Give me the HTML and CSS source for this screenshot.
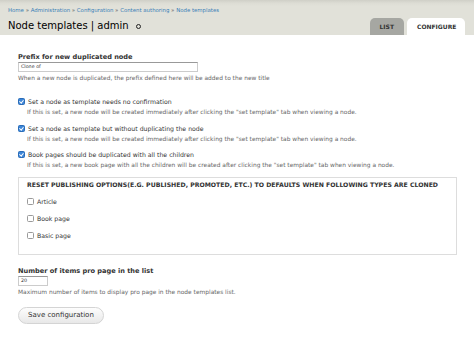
FILE: index.html
```html
<!DOCTYPE html>
<html>
<head>
<meta charset="utf-8">
<link rel="stylesheet" href="styles.css">
</head>
<body>
<div class="header">
  <div class="head-left">
    <div class="breadcrumb"><a>Home</a> » <a>Administration</a> » <a>Configuration</a> » <a>Content authoring</a> » <a>Node templates</a></div>
    <h1 class="title">Node templates | admin <span class="shortcut"></span></h1>
  </div>
  <ul class="tabs">
    <li class="tab">LIST</li>
    <li class="tab active">CONFIGURE</li>
  </ul>
</div>
<div class="content">
  <div class="item">
    <label class="label">Prefix for new duplicated node</label>
    <div class="input wide">Clone of</div>
    <div class="desc">When a new node is duplicated, the prefix defined here will be added to the new title</div>
  </div>
  <div class="check-item">
    <div class="check-row"><span class="cb checked"></span>Set a node as template needs no confirmation</div>
    <div class="desc indent">If this is set, a new node will be created immediately after clicking the "set template" tab when viewing a node.</div>
  </div>
  <div class="check-item">
    <div class="check-row"><span class="cb checked"></span>Set a node as template but without duplicating the node</div>
    <div class="desc indent">If this is set, a new node will be created immediately after clicking the "set template" tab when viewing a node.</div>
  </div>
  <div class="check-item">
    <div class="check-row"><span class="cb checked"></span>Book pages should be duplicated with all the children</div>
    <div class="desc indent">If this is set, a new book page with all the children will be created after clicking the "set template" tab when viewing a node.</div>
  </div>
  <div class="fieldset">
    <div class="legend">RESET PUBLISHING OPTIONS(E.G. PUBLISHED, PROMOTED, ETC.) TO DEFAULTS WHEN FOLLOWING TYPES ARE CLONED</div>
    <div class="check-row plain"><span class="cb"></span>Article</div>
    <div class="check-row plain"><span class="cb"></span>Book page</div>
    <div class="check-row plain"><span class="cb"></span>Basic page</div>
  </div>
  <div class="item">
    <label class="label">Number of items pro page in the list</label>
    <div class="input small">20</div>
    <div class="desc">Maximum number of items to display pro page in the node templates list.</div>
  </div>
  <div class="button">Save configuration</div>
</div>
</body>
</html>
```
FILE: styles.css
```css
html, body {
  margin: 0;
  padding: 0;
  background: #fff;
  font-family: "DejaVu Sans", Verdana, sans-serif;
  color: #333;
}
.header {
  background: linear-gradient(#cfcfc7 0, #dcdcd4 3px, #e1e1d9 6px, #e1e1d9 100%);
  height: 35px;
  display: flex;
  justify-content: space-between;
  align-items: flex-end;
  padding: 0 9px 0 8px;
  box-sizing: border-box;
}
.head-left {
  align-self: flex-start;
  padding-top: 7px;
}
.breadcrumb {
  font-size: 5.4px;
  color: #666;
  line-height: 7px;
}
.breadcrumb a {
  color: #3a7fb7;
}
.title {
  margin: 5px 0 0 0;
  font-size: 10px;
  font-weight: normal;
  color: #000;
  line-height: 13px;
  display: flex;
  align-items: center;
}
.shortcut {
  display: inline-block;
  width: 3px;
  height: 3px;
  border: 1.3px solid #222;
  border-radius: 50%;
  margin-left: 7px;
  margin-top: 2px;
}
.tabs {
  list-style: none;
  margin: 0;
  padding: 0;
  display: flex;
  gap: 3px;
}
.tab {
  font-size: 6px;
  font-weight: bold;
  color: #333;
  background: #a6a7a2;
  border-radius: 5px 5px 0 0;
  height: 17px;
  line-height: 17px;
  padding: 0 10px;
}
.tab.active {
  background: #fff;
  padding: 0 10px;
  width: 38px;
  text-align: center;
}
.content {
  padding: 18px 17px 0 18px;
}
.label {
  display: block;
  font-size: 6.6px;
  font-weight: bold;
  color: #333;
  line-height: 9px;
}
.input {
  border: 1px solid #ccc;
  border-top-color: #999;
  font-size: 4.8px;
  line-height: 8px;
  height: 8px;
  padding: 0 2px;
  color: #333;
  box-sizing: content-box;
}
.input.wide { width: 174px; }
.input.small { width: 24px; }
.desc {
  font-size: 5.9px;
  color: #666;
  line-height: 8px;
  margin-top: 2px;
}
.desc.indent { padding-left: 9px; margin-top: 2px; }
.content > .item:first-child + .check-item { margin-top: 15px; }
.check-item + .check-item { margin-top: 7.5px; }
.check-row {
  display: flex;
  align-items: center;
  font-size: 6.2px;
  color: #333;
  line-height: 9px;
}
.cb {
  display: inline-block;
  width: 5px;
  height: 5px;
  border: 1px solid #9a9a9a;
  border-radius: 1.5px;
  background: #fff;
  margin-right: 3px;
  position: relative;
}
.cb.checked {
  background: #3d86d8;
  border-color: #2a6cb8;
}
.cb.checked::after {
  content: "";
  position: absolute;
  left: 1.3px;
  top: 0.2px;
  width: 1.5px;
  height: 3px;
  border: solid #fff;
  border-width: 0 1px 1px 0;
  transform: rotate(40deg);
}
.fieldset {
  margin-top: 8px;
  border: 1px solid #ddd;
  padding: 3px 8px 9px 8px;
  height: 64px;
}
.legend {
  font-size: 6.2px;
  font-weight: bold;
  color: #333;
  line-height: 8px;
  margin-bottom: 8px;
}
.fieldset .check-row.plain {
  margin-bottom: 8px;
}
.fieldset + .item { margin-top: 12px; }
.button {
  display: inline-block;
  margin-top: 11px;
  font-size: 7px;
  color: #333;
  padding: 0 9px;
  height: 15px;
  line-height: 15px;
  border: 1px solid #d4d4d4;
  border-radius: 9px;
  background: linear-gradient(#fdfdfd, #e8e8e8);
}
```
